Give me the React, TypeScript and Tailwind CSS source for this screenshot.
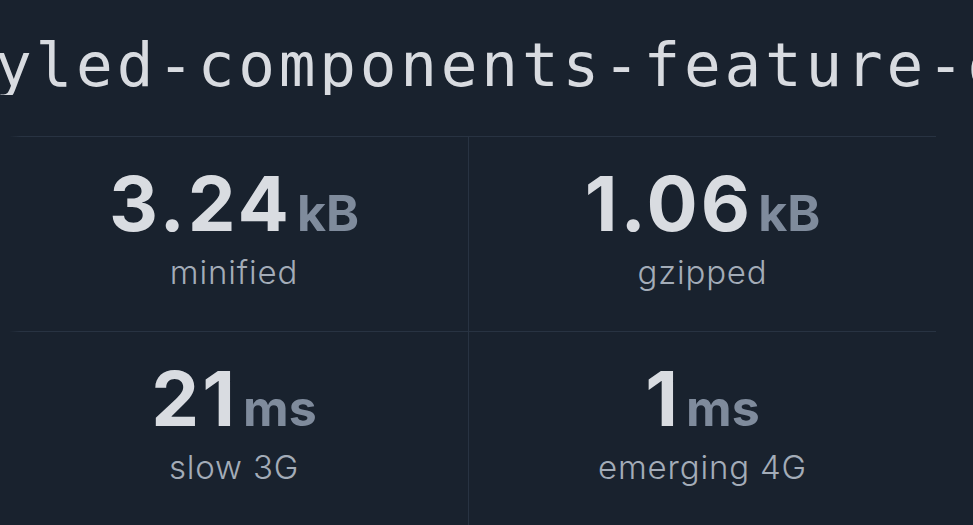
import React from "react";

type Stat = { value: string; unit: string; label: string };

const rows: Stat[][] = [
  [
    { value: "3.24", unit: "kB", label: "minified" },
    { value: "1.06", unit: "kB", label: "gzipped" },
  ],
  [
    { value: "21", unit: "ms", label: "slow 3G" },
    { value: "1", unit: "ms", label: "emerging 4G" },
  ],
];

function StatCell({ stat, divider }: { stat: Stat; divider?: boolean }) {
  return (
    <div
      className={`flex flex-col items-center justify-center pb-[14px] ${
        divider ? "border-l border-[#283342]" : ""
      }`}
    >
      <div className="flex items-baseline">
        <span className="text-[76px] font-bold leading-none tracking-[3px] text-[#d9dce1]">
          {stat.value}
        </span>
        <span className="ml-[5px] text-[50px] font-bold leading-none text-[#7f8b9c]">
          {stat.unit}
        </span>
      </div>
      <div className="mt-[15px] text-[33px] font-light leading-none tracking-wide text-[#a3acb8]">
        {stat.label}
      </div>
    </div>
  );
}

export default function App() {
  return (
    <div
      className="h-[525px] w-[973px] overflow-hidden bg-[#19222e]"
      style={{ fontFamily: "Inter, 'Noto Sans', sans-serif" }}
    >
      {/* Package name */}
      <div className="overflow-hidden pt-[34px]">
        <h1
          className="-ml-[86px] whitespace-nowrap text-[61px] font-normal leading-none tracking-[3.8px] text-[#d8dbe0]"
          style={{ fontFamily: "'DejaVu Sans Mono', 'Liberation Mono', monospace" }}
        >
          styled-components-feature-detection
        </h1>
      </div>

      {/* Stats grid */}
      <div className="mt-[41px] w-[936px]">
        {rows.map((row, i) => (
          <div key={i}>
            <div className="h-px bg-gradient-to-r from-transparent from-[1%] to-[#283342] to-[2.2%]" />
            <div className="grid h-[194px] grid-cols-2">
              <StatCell stat={row[0]} />
              <StatCell stat={row[1]} divider />
            </div>
          </div>
        ))}
      </div>
    </div>
  );
}
